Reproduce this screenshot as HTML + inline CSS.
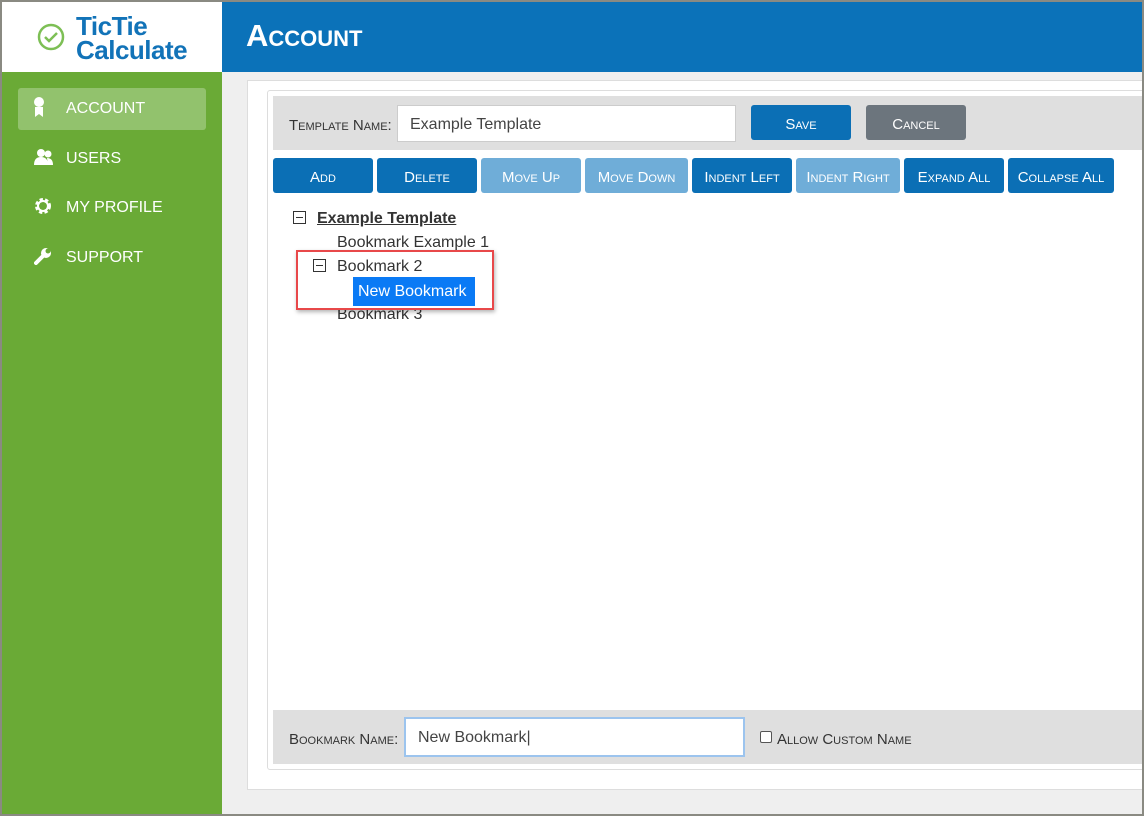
<!DOCTYPE html>
<html><head><style>
*{box-sizing:border-box;margin:0;padding:0}
body{width:1144px;height:816px;overflow:hidden;font-family:"Liberation Sans",sans-serif;background:#8a8a82;position:relative}
#f{position:absolute;left:2px;top:2px;width:1140px;height:812px;background:#efefef;overflow:hidden}
.abs{position:absolute}
.sc{font-variant:small-caps}
.btn{position:absolute;top:156px;height:35px;color:#fff;font-size:15px;font-variant:small-caps;display:flex;align-items:center;justify-content:center;border-radius:3px;background:#0b6fb5;padding-top:3px}
.lt{background:#6fadd8}
.nav{position:absolute;left:64px;color:#fff;font-size:16px}
.tr{position:absolute;font-size:16px;color:#333}
.mb{position:absolute;width:13px;height:13px;border:1.5px solid #333}
.mb:after{content:"";position:absolute;left:2px;right:2px;top:4.5px;height:1.5px;background:#333}
</style></head><body><div id="f">
<div class="abs" style="left:0;top:0;width:220px;height:70px;background:#fff"></div>
<svg class="abs" style="left:34px;top:20px" width="30" height="30" viewBox="0 0 30 30"><circle cx="15" cy="15" r="12" fill="none" stroke="#7dbf55" stroke-width="2.5"/><path d="M9 15l4 4 8-8" fill="none" stroke="#7dbf55" stroke-width="2.5"/></svg>
<div class="abs" style="left:74px;top:12px;color:#1273b8;font-weight:bold;font-size:26px;line-height:24px;letter-spacing:-0.5px">TicTie<br>Calculate</div>
<div class="abs" style="left:0;top:70px;width:220px;height:742px;background:#6aaa36"></div>
<div class="abs" style="left:16px;top:86px;width:188px;height:42px;background:#92c26d;border-radius:3px"></div>
<div class="nav" style="top:98px">ACCOUNT</div><div class="nav" style="top:148px">USERS</div><div class="nav" style="top:197px">MY PROFILE</div><div class="nav" style="top:247px">SUPPORT</div>
<svg class="abs" style="left:30px;top:94px" width="14" height="22"><circle cx="7" cy="6" r="5" fill="#fff"/><path d="M3 11h8v10l-4-3-4 3z" fill="#fff"/></svg>
<svg class="abs" style="left:32px;top:146px" width="20" height="18"><circle cx="7" cy="5" r="4" fill="#fff"/><circle cx="14" cy="6" r="3.5" fill="#fff"/><path d="M0 17q0-8 7-8t7 8z M13 10q6 0 6 7h-5z" fill="#fff"/></svg>
<svg class="abs" style="left:32px;top:195px" width="18" height="18" viewBox="0 0 18 18"><circle cx="9" cy="9" r="6" fill="none" stroke="#fff" stroke-width="4" stroke-dasharray="3 2"/><circle cx="9" cy="9" r="5" fill="none" stroke="#fff" stroke-width="2"/></svg>
<svg class="abs" style="left:32px;top:245px" width="18" height="18"><path d="M2 16l8-8" stroke="#fff" stroke-width="4" stroke-linecap="round"/><circle cx="12" cy="6" r="5" fill="#fff"/><circle cx="14" cy="4" r="2.5" fill="#6aaa36"/></svg>
<div class="abs" style="left:220px;top:0;width:920px;height:70px;background:#0b72b9"></div>
<div class="abs sc" style="left:244px;top:16px;color:#fff;font-size:31px;font-weight:bold">Account</div>
<div class="abs" style="left:245px;top:78px;width:900px;height:710px;background:#fff;border:1px solid #ddd"></div>
<div class="abs" style="left:265px;top:88px;width:880px;height:680px;background:#fff;border:1px solid #ddd;border-radius:3px"></div>
<div class="abs" style="left:271px;top:94px;width:870px;height:54px;background:#dfdfdf"></div>
<div class="abs sc" style="left:287px;top:115px;font-size:15px;color:#333">Template Name:</div>
<div class="abs" style="left:395px;top:103px;width:339px;height:37px;background:#fff;border:1px solid #ccc;font-size:16px;color:#444;padding:10px 12px 0">Example Template</div>
<div class="btn" style="left:749px;top:103px;width:100px">Save</div>
<div class="btn" style="left:864px;top:103px;width:100px;background:#6c757d">Cancel</div>
<div class="btn" style="left:271px;width:100px">Add</div>
<div class="btn" style="left:375px;width:100px">Delete</div>
<div class="btn lt" style="left:479px;width:100px">Move Up</div>
<div class="btn lt" style="left:583px;width:103px">Move Down</div>
<div class="btn" style="left:690px;width:100px">Indent Left</div>
<div class="btn lt" style="left:794px;width:104px">Indent Right</div>
<div class="btn" style="left:902px;width:100px">Expand All</div>
<div class="btn" style="left:1006px;width:106px">Collapse All</div>
<div class="mb" style="left:291px;top:209px"></div>
<div class="tr" style="left:315px;top:208px;font-weight:bold;text-decoration:underline">Example Template</div>
<div class="tr" style="left:335px;top:232px">Bookmark Example 1</div>
<div class="tr" style="left:335px;top:304px">Bookmark 3</div>
<div class="abs" style="left:294px;top:248px;width:198px;height:60px;border:2px solid #e8484a;background:#fff;box-shadow:1px 2px 4px rgba(0,0,0,.3)"></div>
<div class="mb" style="left:311px;top:257px"></div>
<div class="tr" style="left:335px;top:256px">Bookmark 2</div>
<div class="abs" style="left:351px;top:275px;width:122px;height:29px;background:#0a7af5;color:#fff;font-size:16px;padding:6px 5px 0">New Bookmark</div>
<div class="abs" style="left:271px;top:708px;width:870px;height:54px;background:#dfdfdf"></div>
<div class="abs sc" style="left:287px;top:729px;font-size:15px;color:#333">Bookmark Name:</div>
<div class="abs" style="left:402px;top:715px;width:341px;height:40px;background:#fff;border:2px solid #9cc4ee;font-size:16px;color:#444;padding:10px 12px 0">New Bookmark|</div>
<div class="abs" style="left:758px;top:729px;width:12px;height:12px;border:1px solid #555;border-radius:2px;background:#fff"></div>
<div class="abs sc" style="left:775px;top:729px;font-size:15px;color:#333">Allow Custom Name</div>
</div></body></html>
